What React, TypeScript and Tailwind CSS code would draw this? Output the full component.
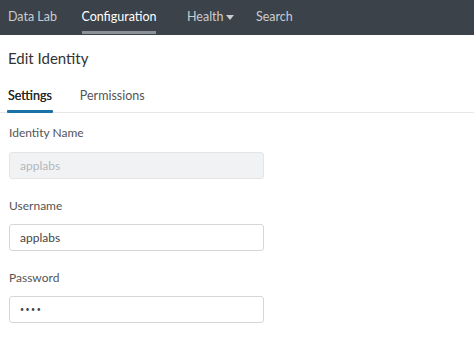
import React from "react";

export default function App() {
  const font = { fontFamily: "Lato, 'Open Sans', sans-serif" };
  return (
    <div className="w-[474px] h-[339px] bg-white overflow-hidden" style={font}>
      <div className="h-[35px] bg-[#3c4249] flex items-stretch text-[12.5px]">
        <div className="pl-[8px] w-[82px] flex items-center text-[#c9ccd0]">Data Lab</div>
        <div className="relative w-[74px] flex items-center justify-center text-white">
          Configuration
          <div className="absolute left-0 right-0 bottom-[1px] h-[3px] bg-[#8b9197]" />
        </div>
        <div className="pl-[31px] w-[100px] flex items-center text-[#c9ccd0]">
          Health
          <svg width="8" height="5" viewBox="0 0 8 5" className="ml-[2px] mt-[-1px]">
            <path d="M0 0h8L4 5z" fill="#c9ccd0" />
          </svg>
        </div>
        <div className="flex items-center text-[#c9ccd0]">Search</div>
      </div>
      <div className="pl-[8px] pt-[13px] text-[15px] text-[#333] leading-[20px]">Edit Identity</div>
      <div className="mt-[19px] flex border-b border-[#e4e6e8] text-[12.5px] text-[#444]">
        <div className="ml-[8px] relative pb-[7px] leading-[18px] text-[#2a2a2a] [text-shadow:0_0_0.3px_#2a2a2a]">
          Settings
          <div className="absolute left-[-1px] right-[-1px] bottom-[-1px] h-[3px] bg-[#1b72a8] rounded-[1px]" />
        </div>
        <div className="ml-[28px] pb-[7px] leading-[18px] text-[#555]">Permissions</div>
      </div>
      <div className="pl-[9px] text-[12px]">
        <div className="mt-[12px] text-[#555] leading-[16px]">Identity Name</div>
        <div className="mt-[11px] w-[255px] h-[27px] rounded-[3px] border border-[#e3e5e7] bg-[#f1f2f4] flex items-center pl-[10px] text-[#b3b7bc]">applabs</div>
        <div className="mt-[19px] text-[#555] leading-[16px]">Username</div>
        <div className="mt-[10px] w-[255px] h-[27px] rounded-[3px] border border-[#d4d7da] bg-white flex items-center pl-[10px] text-[#444]">applabs</div>
        <div className="mt-[19px] text-[#555] leading-[16px]">Password</div>
        <div className="mt-[10px] w-[255px] h-[27px] rounded-[3px] border border-[#d4d7da] bg-white flex items-center pl-[10px] text-[#444] text-[7px] tracking-[1.5px]">••••</div>
      </div>
    </div>
  );
}
